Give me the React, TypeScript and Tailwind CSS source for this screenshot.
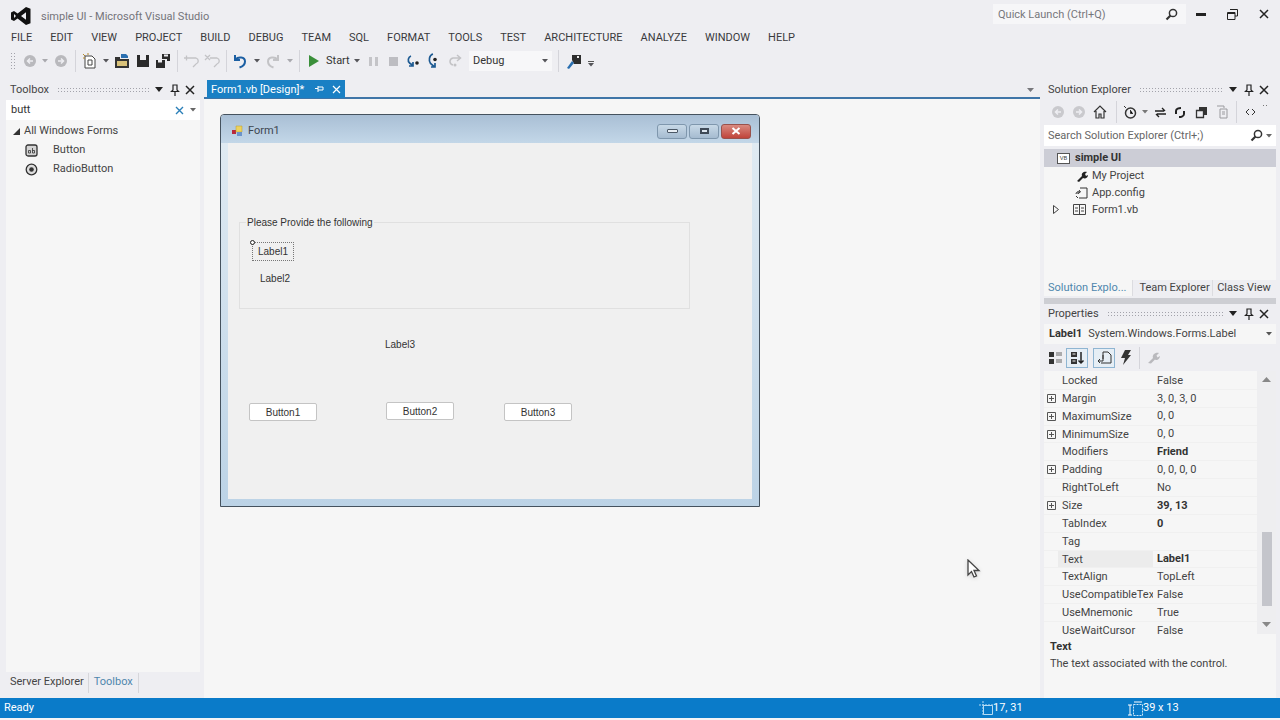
import type { ReactNode } from "react";

const grip =
  "bg-[radial-gradient(#a3a3ab_0.7px,transparent_0.8px)] bg-[length:3px_3px]";

const menuItems = [
  "FILE", "EDIT", "VIEW", "PROJECT", "BUILD", "DEBUG", "TEAM", "SQL",
  "FORMAT", "TOOLS", "TEST", "ARCHITECTURE", "ANALYZE", "WINDOW", "HELP",
];

const props: { name: string; value: string; bold?: boolean; plus?: boolean; hot?: boolean }[] = [
  { name: "Locked", value: "False" },
  { name: "Margin", value: "3, 0, 3, 0", plus: true },
  { name: "MaximumSize", value: "0, 0", plus: true },
  { name: "MinimumSize", value: "0, 0", plus: true },
  { name: "Modifiers", value: "Friend", bold: true },
  { name: "Padding", value: "0, 0, 0, 0", plus: true },
  { name: "RightToLeft", value: "No" },
  { name: "Size", value: "39, 13", bold: true, plus: true },
  { name: "TabIndex", value: "0", bold: true },
  { name: "Tag", value: "" },
  { name: "Text", value: "Label1", bold: true, hot: true },
  { name: "TextAlign", value: "TopLeft" },
  { name: "UseCompatibleTex", value: "False" },
  { name: "UseMnemonic", value: "True" },
  { name: "UseWaitCursor", value: "False" },
];

// toolbar slot
const Slot = ({ w = 20, className = "", children }: { w?: number; className?: string; children?: ReactNode }) => (
  <div className={`flex h-5 shrink-0 items-center justify-center ${w === 10 ? "w-[10px]" : "w-5"} ${className}`}>
    {children}
  </div>
);

const Drop = ({ className = "", light = false }: { className?: string; light?: boolean }) => (
  <Slot w={10} className={className}>
    <svg width="6" height="4" viewBox="0 0 6 4">
      <path d="M0 0h6L3 3.5z" fill={light ? "#a9a9ae" : "#55555a"} />
    </svg>
  </Slot>
);

const Sep = ({ className = "" }: { className?: string }) => (
  <div className={`h-[22px] w-px shrink-0 bg-[#d4d4da] ${className}`} />
);

const NavCircle = ({ flip = false, color = "#b9b9bd" }: { flip?: boolean; color?: string }) => (
  <svg width="14" height="14" viewBox="0 0 14 14">
    <circle cx="7" cy="7" r="6" fill={color} />
    <path d={flip ? "M4 7h5M7 4.5 9.5 7 7 9.5" : "M10 7H5M7 4.5 4.5 7 7 9.5"} stroke="#eeeef2" strokeWidth="1.5" fill="none" />
  </svg>
);

const Save = ({ double = false }: { double?: boolean }) => (
  <svg width="16" height="16" viewBox="0 0 16 16">
    {double ? (
      <>
        <path d="M7 1h8v7H12V6H7z" fill="#2b2b2b" />
        <path d="M1 7h9v8H1z" fill="#2b2b2b" />
        <path d="M3 7h4v2.5H3zM9 1.5h4v2H9z" fill="#eeeef2" />
      </>
    ) : (
      <>
        <path d="M2 2h12v12H2z" fill="#2b2b2b" />
        <path d="M5 2h6v5H5z" fill="#eeeef2" />
      </>
    )}
  </svg>
);

const PanelIcons = () => (
  <div className="flex items-center">
    <svg width="10" height="6" viewBox="0 0 10 6" className="mr-[6px]">
      <path d="M1 0h8L5 5z" fill="#222" />
    </svg>
    <svg width="10" height="12" viewBox="0 0 10 12" className="mr-[5px]">
      <path d="M3 1h4v5l1.5 1.5h-7L3 6zM5 7.5V12" stroke="#222" strokeWidth="1.2" fill="none" />
    </svg>
    <svg width="10" height="10" viewBox="0 0 10 10">
      <path d="M1 1l8 8M9 1 1 9" stroke="#222" strokeWidth="1.5" />
    </svg>
  </div>
);

const Magnifier = ({ color = "#333" }: { color?: string }) => (
  <svg width="13" height="13" viewBox="0 0 13 13">
    <circle cx="8" cy="5" r="3.6" stroke={color} strokeWidth="1.5" fill="none" />
    <path d="M5.5 7.5 1.5 11.5" stroke={color} strokeWidth="2.2" />
  </svg>
);

const CaptionButton = ({ className, children }: { className: string; children: ReactNode }) => (
  <div className={`flex h-[15px] items-center justify-center rounded-[3px] border ${className}`}>{children}</div>
);

function TitleBar() {
  return (
    <div className="flex h-7 shrink-0 items-center pr-[11px]">
      <svg width="20" height="18" viewBox="0 0 20 18" className="ml-[11px] mt-[3px]">
        <path
          fillRule="evenodd"
          d="M0 5.6 3 4l3.6 2.6L15 0l4.5 1.8v14.4L15 18l-8.4-6.6L3 14l-3-1.6zM3 7v4l2-2zM10 9l5 3.800V5.200z"
          fill="#111"
        />
      </svg>
      <span className="ml-[10px] mt-[6px] flex-1 whitespace-nowrap text-[#74747a]">simple UI - Microsoft Visual Studio</span>
      <div className="flex h-5 w-[193px] items-center justify-between bg-[#f6f6f8] pl-[5px] pr-2 text-[#77777c]">
        <span className="pt-[2px]">Quick Launch (Ctrl+Q)</span>
        <Magnifier />
      </div>
      <svg width="10" height="3" viewBox="0 0 10 3" className="ml-[10px]">
        <path d="M0 0h10v3H0z" fill="#222" />
      </svg>
      <svg width="11" height="11" viewBox="0 0 11 11" className="ml-[21px]">
        <path d="M3 .5h7.500V7H8M.5 3.500H8v7H.5z" stroke="#222" fill="none" />
        <path d="M.5 4.500H8" stroke="#222" />
      </svg>
      <svg width="10" height="10" viewBox="0 0 10 10" className="ml-[21px]">
        <path d="M1 1l8 8M9 1 1 9" stroke="#222" strokeWidth="1.5" />
      </svg>
    </div>
  );
}

function Toolbar() {
  return (
    <div className="flex h-[26px] shrink-0 items-center pl-[10px]">
      <div className={`h-[18px] w-[6px] ${grip}`} />
      <Slot className="ml-1"><NavCircle /></Slot>
      <Drop light />
      <Slot className="ml-px"><NavCircle flip /></Slot>
      <Sep className="ml-1" />
      <Slot className="ml-1">
        <svg width="16" height="16" viewBox="0 0 16 16">
          <path d="M3 3h7l3 3v9H3z" fill="#fff" stroke="#444" />
          <path d="M6 7h4v5H6z" fill="none" stroke="#444" />
          <path d="M1 1l2 2M6 0v2M1 5h2" stroke="#b58a2c" />
        </svg>
      </Slot>
      <Drop className="ml-px" />
      <Slot className="ml-px">
        <svg width="17" height="16" viewBox="0 0 17 16">
          <path d="M1 4h5v2h9v9H1z" fill="#333" />
          <path d="M3 8h10v5H3z" fill="#d9c27a" />
          <path d="M7 1h5l2 2v2H7z" fill="#2a6fb0" />
        </svg>
      </Slot>
      <Slot className="ml-px"><Save /></Slot>
      <Slot><Save double /></Slot>
      <Sep className="ml-1" />
      <Slot className="ml-1">
        <svg width="18" height="14" viewBox="0 0 18 14">
          <path d="M1 4h5M3.500 1.500v5M6 4l7 0c3 1 3 5 0 6l-3 3" stroke="#c3c3c6" strokeWidth="1.3" fill="none" />
        </svg>
      </Slot>
      <Slot className="ml-px">
        <svg width="18" height="14" viewBox="0 0 18 14">
          <path d="M1 1l5 5M6 1 1 6M6 4h7c3 1 3 5 0 6l-3 3" stroke="#c3c3c6" strokeWidth="1.3" fill="none" />
        </svg>
      </Slot>
      <Sep className="ml-[3px]" />
      <Slot className="ml-[3px]">
        <svg width="16" height="16" viewBox="0 0 16 16">
          <path d="M3 2v5h5" stroke="#1c5fa3" strokeWidth="2" fill="none" />
          <path d="M3.500 6.500C6 3.500 13 3.500 13 8.500c0 3-2.500 5-5.500 6" stroke="#1c5fa3" strokeWidth="2" fill="none" />
        </svg>
      </Slot>
      <Drop className="ml-[2px]" />
      <Slot className="ml-px">
        <svg width="14" height="16" viewBox="0 0 14 16">
          <path d="M12 2v5H7M11.500 6.500C9 3.500 2 3.500 2 8.500c0 3 2.500 5 5.500 6" stroke="#c3c3c6" strokeWidth="2" fill="none" />
        </svg>
      </Slot>
      <Drop className="ml-[2px]" light />
      <Sep className="ml-1" />
      <Slot className="ml-1">
        <svg width="10" height="12" viewBox="0 0 10 12">
          <path d="M0 0l10 6-10 6z" fill="#3a8f3a" />
        </svg>
      </Slot>
      <span className="ml-[2px] w-[24px] shrink-0 pt-px text-[#333]">Start</span>
      <Drop className="ml-[2px]" />
      <Slot className="ml-[1px]">
        <svg width="9" height="9" viewBox="0 0 9 9">
          <path d="M0 0h3v9H0zM6 0h3v9H6z" fill="#c4c4c8" />
        </svg>
      </Slot>
      <Slot>
        <svg width="9" height="9" viewBox="0 0 9 9">
          <path d="M0 0h9v9H0z" fill="#bdbdc2" />
        </svg>
      </Slot>
      <Slot>
        <svg width="15" height="15" viewBox="0 0 15 15">
          <path d="M5 2C2 3 1.500 7 3.500 9L7 11.500M7 8v4H3" stroke="#1d5a92" strokeWidth="1.700" fill="none" />
          <circle cx="11" cy="9" r="1.800" fill="#222" />
        </svg>
      </Slot>
      <Slot className="ml-px">
        <svg width="14" height="16" viewBox="0 0 14 16">
          <path d="M6 1C2 2 1.500 8 3.500 10.500L7 13.500M8 10v4H4" stroke="#1d5a92" strokeWidth="1.700" fill="none" />
          <circle cx="8" cy="6.500" r="1.800" fill="#222" />
        </svg>
      </Slot>
      <Slot className="ml-px">
        <svg width="14" height="14" viewBox="0 0 14 14">
          <path d="M13 4H5C1 5 1 10 5 11M9 1l3.500 3L9 7" stroke="#c3c3c6" strokeWidth="1.500" fill="none" />
          <circle cx="7" cy="11" r="1.500" fill="#c3c3c6" />
        </svg>
      </Slot>
      <div className="ml-1 flex h-5 w-[83px] shrink-0 items-center justify-between bg-[#f7f7f9] pl-[4px] pr-[4px] text-[#333]">
        <span className="pt-px">Debug</span>
        <svg width="6" height="4" viewBox="0 0 6 4">
          <path d="M0 0h6L3 3.500z" fill="#55555a" />
        </svg>
      </div>
      <Sep className="ml-[6px]" />
      <Slot className="ml-[5px]">
        <svg width="16" height="15" viewBox="0 0 16 15">
          <path d="M6 1h9v9H8L6 6z" fill="#2e2e2e" />
          <path d="M11 2h2v2h-2z" fill="#eee" />
          <path d="M1 14l5-7 2 2-5 6z" fill="#2a6fb0" />
        </svg>
      </Slot>
      <div className="ml-[2px] mt-[8px] flex h-[8px] w-[10px] shrink-0 flex-col items-center">
        <div className="h-px w-[6px] bg-[#555]" />
        <svg width="6" height="4" viewBox="0 0 6 4" className="mt-px">
          <path d="M0 0h6L3 3.500z" fill="#55555a" />
        </svg>
      </div>
    </div>
  );
}

function ToolboxPanel() {
  return (
    <div className="flex w-[204px] shrink-0 flex-col">
      <div className="flex h-5 shrink-0 items-center pl-[10px] pr-[9px]">
        <span className="text-[#444]">Toolbox</span>
        <div className={`ml-2 mr-[5px] h-[6px] flex-1 ${grip}`} />
        <PanelIcons />
      </div>
      <div className="ml-[6px] mr-[4px] flex h-5 shrink-0 items-center bg-white pl-[5px] pr-[4px]">
        <span className="flex-1 text-[#333]">butt</span>
        <svg width="9" height="9" viewBox="0 0 9 9" className="mr-[6px]">
          <path d="M1 1l7 7M8 1 1 8" stroke="#2a7fb8" strokeWidth="1.400" />
        </svg>
        <svg width="6" height="4" viewBox="0 0 6 4">
          <path d="M0 0h6L3 3.500z" fill="#666" />
        </svg>
      </div>
      <div className="ml-[6px] mr-[4px] flex flex-1 flex-col bg-[#f6f6f6] pt-[2px]">
        <div className="flex h-[19px] items-center pl-[7px] text-[#444]">
          <svg width="7" height="7" viewBox="0 0 7 7">
            <path d="M7 0v7H0z" fill="#333" />
          </svg>
          <span className="ml-[4px]">All Windows Forms</span>
        </div>
        <div className="flex h-[19px] items-center pl-[19px] text-[#444]">
          <svg width="13" height="13" viewBox="0 0 13 13">
            <rect x="1" y="1" width="11" height="11" rx="2" fill="#d4d4d4" stroke="#333" strokeWidth="1.300" />
            <path d="M3.500 9V6.500h2V9h-2zM7.500 4v5h2V6.500h-2" stroke="#333" strokeWidth="0.800" fill="none" />
          </svg>
          <span className="ml-[15px]">Button</span>
        </div>
        <div className="flex h-[19px] items-center pl-[19px] text-[#444]">
          <svg width="13" height="13" viewBox="0 0 13 13">
            <circle cx="6.500" cy="6.500" r="5.300" fill="#ddd" stroke="#333" strokeWidth="1.300" />
            <circle cx="6.500" cy="6.500" r="2.300" fill="#333" />
          </svg>
          <span className="ml-[15px]">RadioButton</span>
        </div>
      </div>
      <div className="flex h-5 shrink-0 items-center pt-px">
        <span className="flex h-5 items-center border-r border-[#d6d6da] pl-[10px] pr-[4px] text-[#444]">Server Explorer</span>
        <span className="flex h-5 items-center border-r border-[#d6d6da] pl-[5px] pr-[5px] text-[#4f86ad]">Toolbox</span>
      </div>
      <div className="h-[6px] shrink-0" />
    </div>
  );
}

function DesignedForm() {
  return (
    <div className="relative h-[393px] w-[540px] overflow-hidden rounded-t-[4px] border border-[#45525e] bg-[linear-gradient(180deg,#e2ecf3,#bcd3e6)]">
      <div className="flex h-[28px] items-center bg-[linear-gradient(180deg,#a9bfd5,#c3d7e8)] pl-[10px] pr-[8px] pt-[4px]">
        <svg width="14" height="14" viewBox="0 0 14 14">
          <path d="M1 6h4v4H1z" fill="#b8273a" />
          <path d="M5 2h6v6H5z" fill="#ecd25e" stroke="#b89a30" strokeWidth="0.500" />
          <path d="M6 8h5v4H6z" fill="#6b93c9" />
        </svg>
        <span className="ml-[3px] flex-1 pt-px text-[#3d4650]">Form1</span>
        <div className="flex gap-[2px]">
          <CaptionButton className="w-[30px] border-[#7f97ad] bg-[linear-gradient(180deg,#c8d9e7,#a5bbd0)]">
            <div className="h-[4px] w-[11px] rounded-[1px] border border-[#4b5866] bg-[#e8eef4]" />
          </CaptionButton>
          <CaptionButton className="w-[30px] border-[#7f97ad] bg-[linear-gradient(180deg,#c8d9e7,#a5bbd0)]">
            <div className="h-[6px] w-[9px] border-2 border-[#3f4a57] bg-[#dde6ef]" />
          </CaptionButton>
          <CaptionButton className="w-[30px] border-[#99524c] bg-[linear-gradient(180deg,#d98a80,#c0443a)]">
            <svg width="10" height="8" viewBox="0 0 10 8">
              <path d="M1.500 1l7 6M8.500 1l-7 6" stroke="#fff" strokeWidth="2" />
            </svg>
          </CaptionButton>
        </div>
      </div>
      {/* controls sit on the designer canvas */}
      <div className="relative mx-[7px] h-[356px] bg-[#f0f0f0] font-['Liberation_Sans',sans-serif] text-[10px] text-[#333]">
        <div className="absolute left-[11px] top-[79px] h-[87px] w-[451px] border border-[#e0e0e0]" />
        <span className="absolute left-[18px] top-[73px] bg-[#f0f0f0] px-px leading-[14px]">Please Provide the following</span>
        <div className="absolute left-[24px] top-[99px] flex h-[19px] w-[42px] items-center justify-center border border-dotted border-[#777]">Label1</div>
        <div className="absolute left-[22px] top-[97px] h-[5px] w-[5px] rounded-full border border-[#222] bg-white" />
        <span className="absolute left-[32px] top-[129px] leading-[14px]">Label2</span>
        <span className="absolute left-[157px] top-[195px] leading-[14px]">Label3</span>
        <div className="absolute left-[21px] top-[260px] flex h-[18px] w-[68px] items-center justify-center rounded-[2px] border border-[#c4c4c4] bg-white">Button1</div>
        <div className="absolute left-[158px] top-[259px] flex h-[18px] w-[68px] items-center justify-center rounded-[2px] border border-[#c4c4c4] bg-white">Button2</div>
        <div className="absolute left-[276px] top-[260px] flex h-[18px] w-[68px] items-center justify-center rounded-[2px] border border-[#c4c4c4] bg-white">Button3</div>
      </div>
    </div>
  );
}

function Designer() {
  return (
    <div className="flex min-w-0 flex-1 flex-col">
      <div className="flex h-[19px] shrink-0 items-start border-b-2 border-[#3f75a8] pl-[3px] pr-[5px]">
        <div className="flex h-[18px] w-[138px] items-center bg-[#1a80c4] pl-[4px] text-white">
          <span className="flex-1 whitespace-nowrap pt-[2px]">Form1.vb [Design]*</span>
          <svg width="10" height="10" viewBox="0 0 10 10" className="mr-[7px]">
            <path d="M3 2v6M3 3h5v3H3M0 4.500h3" stroke="#fff" fill="none" />
          </svg>
          <svg width="9" height="9" viewBox="0 0 9 9" className="mr-[4px]">
            <path d="M1 1l7 7M8 1 1 8" stroke="#fff" strokeWidth="1.200" />
          </svg>
        </div>
        <svg width="7" height="4" viewBox="0 0 7 4" className="ml-auto mt-[8px] mr-[1px]">
          <path d="M0 0h7L3.500 4z" fill="#77777c" />
        </svg>
      </div>
      <div className="flex-1 bg-[#f6f6f6] pl-[16px] pt-[15px]">
        <DesignedForm />
      </div>
    </div>
  );
}

function SolutionExplorer() {
  return (
    <div className="flex min-h-0 flex-1 flex-col">
      <div className="flex h-5 shrink-0 items-center pl-[8px] pr-[11px]">
        <span className="text-[#444]">Solution Explorer</span>
        <div className={`ml-2 mr-[5px] h-[6px] flex-1 ${grip}`} />
        <PanelIcons />
      </div>
      <div className="relative flex h-[24px] shrink-0 items-center pl-[11px]">
        <NavCircle color="#c9c9cd" />
        <div className="ml-[7px]"><NavCircle flip color="#c9c9cd" /></div>
        <svg width="14" height="14" viewBox="0 0 14 14" className="ml-[7px]">
          <path d="M1 7l6-6 6 6M3 6v7h3V9h2v4h3V6" stroke="#333" strokeWidth="1.200" fill="none" />
        </svg>
        <Sep className="ml-[9px]" />
        <svg width="14" height="14" viewBox="0 0 14 14" className="ml-[6px]">
          <circle cx="7.500" cy="8" r="5" stroke="#333" strokeWidth="1.500" fill="none" />
          <path d="M7.500 5v3.500H10M1 1l2 2" stroke="#333" />
        </svg>
        <svg width="6" height="4" viewBox="0 0 6 4" className="ml-[5px]">
          <path d="M0 0h6L3 3.500z" fill="#777" />
        </svg>
        <svg width="13" height="11" viewBox="0 0 13 11" className="ml-[6px]">
          <path d="M1 4h9M8 1l3 3M12 7H3M5 10 2 7" stroke="#222" strokeWidth="1.400" fill="none" />
        </svg>
        <svg width="12" height="13" viewBox="0 0 12 13" className="ml-[7px]">
          <path d="M2 8V5c0-2 3-3 5-3M10 5v3c0 2-3 3-5 3" stroke="#222" strokeWidth="2" fill="none" />
        </svg>
        <svg width="13" height="13" viewBox="0 0 13 13" className="ml-[9px]">
          <path d="M4 1h8v8H9V4H4z" fill="#333" />
          <path d="M1.500 4.500h7v7h-7z" fill="none" stroke="#333" strokeWidth="1.300" />
        </svg>
        <svg width="13" height="14" viewBox="0 0 13 14" className="ml-[8px]">
          <path d="M1 1h7v2M4 4h7v9H4zM6 7h3M6 9h3" stroke="#9a9a9e" fill="none" />
        </svg>
        <Sep className="ml-[7px]" />
        <svg width="11" height="8" viewBox="0 0 11 8" className="ml-[8px]">
          <path d="M4 1 1 4l3 3M7 1l3 3-3 3" stroke="#333" fill="none" />
        </svg>
        <div className="ml-[7px] mb-[14px] flex gap-[2px]">
          <div className="h-px w-px bg-[#777]" />
          <div className="h-px w-px bg-[#777]" />
        </div>
      </div>
      <div className="mx-[4px] mt-px flex h-[21px] shrink-0 items-center justify-between bg-white pl-[4px] pr-[4px] text-[#666]">
        <span className="pt-[2px]">Search Solution Explorer (Ctrl+;)</span>
        <div className="flex items-center gap-[3px]">
          <Magnifier />
          <svg width="6" height="4" viewBox="0 0 6 4">
            <path d="M0 0h6L3 3.500z" fill="#666" />
          </svg>
        </div>
      </div>
      <div className="mx-[4px] mt-[3px] flex-1 bg-[#f6f6f6] text-[#444]">
        <div className="flex h-[18px] items-center bg-[#cccdd6] pl-[13px]">
          <div className="flex h-[11px] w-[13px] items-center justify-center border border-[#555] bg-white text-[6px] leading-none text-[#444]">VB</div>
          <span className="ml-[5px] pt-px font-bold text-[#333]">simple UI</span>
        </div>
        <div className="flex h-[17px] items-center pl-[32px]">
          <svg width="12" height="12" viewBox="0 0 12 12">
            <path d="M1 11 6 6c-1-3 2-5 5-4L9 4l1 2 2-1c0 3-3 4-5 3l-4 4z" fill="#222" />
          </svg>
          <span className="ml-[4px] pt-[2px]">My Project</span>
        </div>
        <div className="flex h-[17px] items-center pl-[31px]">
          <svg width="13" height="12" viewBox="0 0 13 12">
            <path d="M5 1h7v10H4M3 5v2" stroke="#333" fill="none" />
            <path d="M1 7c0-2 2-3 4-2M4 3l1.500 2L3 6.500M1 9l2 2" stroke="#333" fill="none" />
          </svg>
          <span className="ml-[4px] pt-[2px]">App.config</span>
        </div>
        <div className="flex h-[17px] items-center pl-[9px]">
          <svg width="6" height="9" viewBox="0 0 6 9">
            <path d="M.5.500l5 4-5 4z" fill="none" stroke="#444" />
          </svg>
          <svg width="13" height="11" viewBox="0 0 13 11" className="ml-[14px]">
            <path d="M.5.500h12v10H.5zM6.500 1v9M2 4h3M2 7h3M8 4h3M8 7h3" stroke="#444" fill="none" />
          </svg>
          <span className="ml-[6px] pt-[2px]">Form1.vb</span>
        </div>
      </div>
      <div className="mb-[2px] flex h-[16px] shrink-0 items-stretch whitespace-nowrap pl-[4px]">
        <span className="flex w-[88px] items-center bg-[#f6f6f6] pl-[4px] pt-px text-[#4f86ad]">Solution Explo...</span>
        <span className="flex w-[80px] items-center justify-center border-l border-[#dcdce0] pl-[4px] pt-px text-[#444]">Team Explorer</span>
        <span className="flex w-[63px] items-center justify-center border-l border-[#dcdce0] pt-px text-[#444]">Class View</span>
      </div>
    </div>
  );
}

function PropertiesPanel() {
  return (
    <div className="flex h-[400px] shrink-0 flex-col">
      <div className="mx-[4px] h-[6px] shrink-0 bg-[#cdced3]" />
      <div className="flex h-[20px] shrink-0 items-center pl-[8px] pr-[11px]">
        <span className="text-[#444]">Properties</span>
        <div className={`ml-2 mr-[5px] h-[6px] flex-1 ${grip}`} />
        <PanelIcons />
      </div>
      <div className="mx-[4px] flex h-[20px] shrink-0 items-center bg-[#f6f6f6] pl-[5px] pr-[4px] text-[#444]">
        <span className="pt-px font-bold text-[#333]">Label1</span>
        <span className="ml-[6px] flex-1 pt-px">System.Windows.Forms.Label</span>
        <svg width="6" height="4" viewBox="0 0 6 4">
          <path d="M0 0h6L3 3.500z" fill="#555" />
        </svg>
      </div>
      <div className="flex h-[27px] shrink-0 items-center pl-[9px]">
        <svg width="14" height="14" viewBox="0 0 14 14">
          <path d="M0 1h5v5H0zM0 8h5v5H0z" fill="#333" />
          <path d="M7 2h6M7 4h6M7 9h6M7 11h6" stroke="#666" />
        </svg>
        <div className="ml-[3px] flex h-5 w-[22px] items-center justify-center border border-[#8fb5d2] bg-[#e6eef5]">
          <svg width="15" height="14" viewBox="0 0 15 14">
            <path d="M1 1h6v5H1zM1 8h6v5H1z" fill="#333" />
            <path d="M2.500 3h3M2.500 10h3" stroke="#eee" />
            <path d="M11 1v11M8.500 9.500 11 12l2.500-2.500" stroke="#222" strokeWidth="1.500" fill="none" />
          </svg>
        </div>
        <div className="ml-[5px] flex h-5 w-[22px] items-center justify-center border border-[#8fb5d2] bg-[#e6eef5]">
          <svg width="15" height="14" viewBox="0 0 15 14">
            <path d="M6 8V1h5l3 3v8H4" stroke="#333" fill="none" />
            <path d="M6 4v6H1M3 8l-2 2 2 2" stroke="#333" fill="none" />
          </svg>
        </div>
        <svg width="12" height="15" viewBox="0 0 12 15" className="ml-[5px]">
          <path d="M5 0h6L8 5h3L3 15l2-7H1z" fill="#333" />
        </svg>
        <Sep className="ml-[7px]" />
        <svg width="13" height="13" viewBox="0 0 13 13" className="ml-[7px]">
          <path d="M1 12 6 7c-1-3 2-6 6-5L9.500 4.500l1 2L13 5c0 3-3 5-5 3.500l-4 4z" fill="#b9b9bd" />
        </svg>
      </div>
      <div className="mx-[4px] flex h-[263px] shrink-0 bg-[#f6f6f6] text-[#444]">
        <div className="h-full w-[213px] overflow-hidden pt-px">
          {props.map((p) => (
            <div key={p.name} className="flex h-[17.86px] items-center border-b border-[#f0f0f0]">
              <div className="flex w-[14px] shrink-0 pl-[3px]">
                {p.plus && (
                  <svg width="9" height="9" viewBox="0 0 9 9">
                    <path d="M.5.500h8v8h-8zM2 4.500h5M4.500 2v5" stroke="#555" fill="none" />
                  </svg>
                )}
              </div>
              <div className={`h-full w-[95px] shrink-0 overflow-hidden whitespace-nowrap pl-[4px] leading-[17px] ${p.hot ? "bg-[#ececec]" : ""}`}>
                {p.name}
              </div>
              <span className={`pl-[4px] pt-px ${p.bold ? "font-bold text-[#333]" : ""}`}>{p.value}</span>
            </div>
          ))}
        </div>
        <div className="flex h-full flex-1 flex-col items-center bg-[#eeeef0]">
          <svg width="9" height="5" viewBox="0 0 9 5" className="mt-[6px]">
            <path d="M4.500 0 9 5H0z" fill="#888" />
          </svg>
          <div className="mt-[150px] h-[74px] w-[10px] bg-[#c4c5cb]" />
          <svg width="9" height="5" viewBox="0 0 9 5" className="mt-[16px]">
            <path d="M4.500 5 9 0H0z" fill="#888" />
          </svg>
        </div>
      </div>
      <div className="mx-[4px] flex-1 bg-[#f6f6f6] pl-[6px] pt-[4px] text-[#333]">
        <div className="h-[17px] font-bold leading-[17px]">Text</div>
        <div className="leading-[17px] text-[#444]">The text associated with the control.</div>
      </div>
    </div>
  );
}

function StatusBar() {
  return (
    <div className="flex h-5 shrink-0 items-center bg-[#0a7bc9] pl-[4px] text-white">
      <span className="w-[975px] shrink-0 pt-px">Ready</span>
      <svg width="14" height="14" viewBox="0 0 14 14">
        <path d="M4 0v14M0 4h14" stroke="#b7dcf4" strokeDasharray="2 1" />
        <path d="M4.500 4.500h9v9h-9z" stroke="#b7dcf4" fill="none" />
      </svg>
      <span className="w-[135px] shrink-0 pt-px">17, 31</span>
      <svg width="15" height="15" viewBox="0 0 15 15">
        <path d="M5.500 3.500h9v11h-9z" stroke="#cfe8f8" fill="none" strokeDasharray="2 1" />
        <path d="M6 1h8M2 4v10M0 14h4M0 4h4" stroke="#fff" />
      </svg>
      <span className="pt-px">39 x 13</span>
    </div>
  );
}

export default function App() {
  return (
    <div className="relative flex h-[720px] w-[1280px] flex-col overflow-hidden bg-[#eeeef2] font-['Roboto',sans-serif] text-[11px]">
      <TitleBar />
      <div className="flex h-5 shrink-0 items-center gap-[18px] pl-[11px] pt-px text-[#3a3a3d]">
        {menuItems.map((m) => (
          <span key={m}>{m}</span>
        ))}
      </div>
      <Toolbar />
      <div className="h-[6px] shrink-0" />
      <div className="flex min-h-0 flex-1">
        <ToolboxPanel />
        <Designer />
        <div className="flex w-[240px] shrink-0 flex-col">
          <SolutionExplorer />
          <PropertiesPanel />
        </div>
      </div>
      <StatusBar />
      <div className="h-[2px] shrink-0 bg-[#f4f4f6]" />
      {/* mouse pointer */}
      <svg width="14" height="20" viewBox="0 0 14 20" className="absolute left-[967px] top-[559px] drop-shadow-sm">
        <path d="M1 1v15l3.500-3.500L7 18l2.500-1L7 11.500h5z" fill="#fff" stroke="#444" strokeWidth="1.300" />
      </svg>
    </div>
  );
}
